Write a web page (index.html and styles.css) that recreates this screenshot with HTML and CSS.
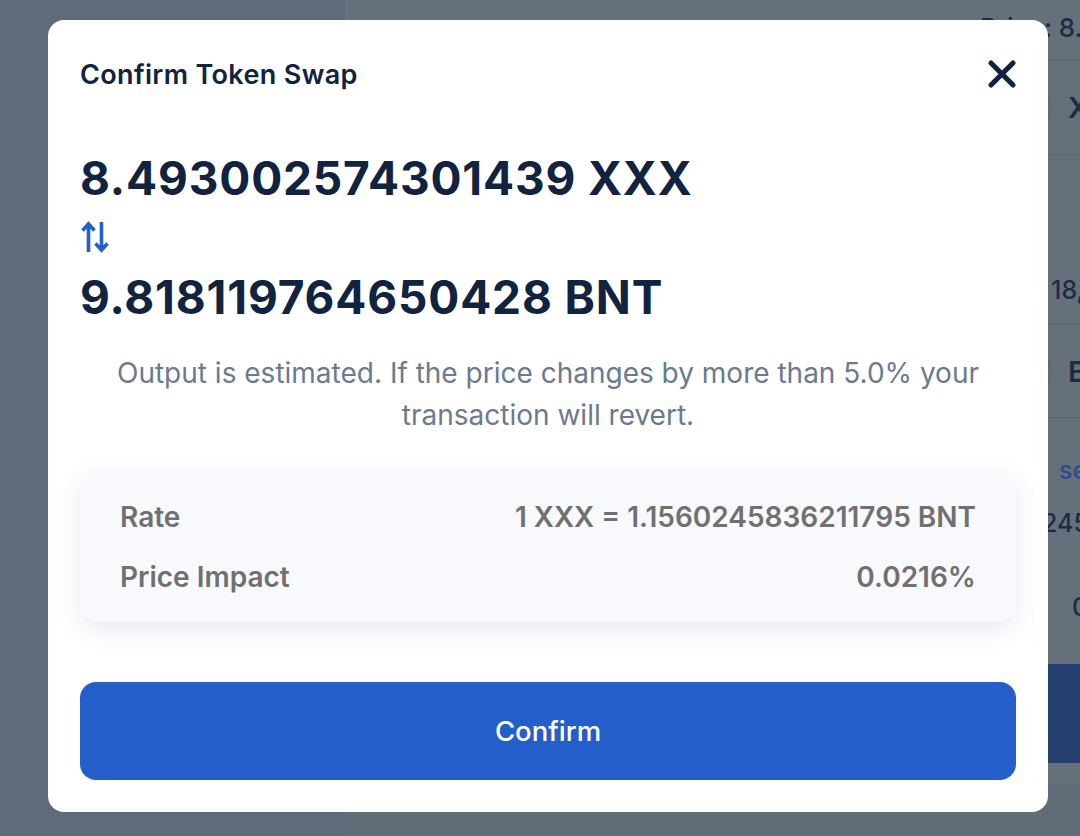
FILE: index.html
```html
<!DOCTYPE html>
<html>
<head>
<meta charset="utf-8">
<link rel="stylesheet" href="styles.css">
</head>
<body>
<div class="page">
  <aside class="sidebar"></aside>
  <main class="main">
    <div class="widget">
      <div class="w-row r1"><span class="w-text">Price: 8.4930</span></div>
      <div class="w-row r2"><span class="coin"></span><span class="w-token">XXX</span></div>
      <div class="w-row r3"><span class="w-text">18,000</span></div>
      <div class="w-row r4"><span class="coin"></span><span class="w-token">BNT</span></div>
      <div class="w-row r5"><span class="w-link">settings</span></div>
      <div class="w-row r6"><span class="w-text">2458</span></div>
      <div class="w-row r7"><span class="w-text">0.02</span></div>
      <div class="w-btn"></div>
    </div>
    <div class="footer"></div>
  </main>
</div>

<div class="modal">
  <div class="modal-head">
    <h2 class="title">Confirm Token Swap</h2>
    <button class="close" aria-label="Close">
      <svg width="32" height="32" viewBox="0 0 32 32"><path d="M5 5L27 27M27 5L5 27" stroke="#11233f" stroke-width="5.2" stroke-linecap="round"/></svg>
    </button>
  </div>
  <div class="amount">8.493002574301439 XXX</div>
  <div class="swap-icon">
    <svg width="30" height="32" viewBox="0 0 30 32"><path d="M8.5 31V4M2.5 9.5L8.5 3L14.5 9.5" stroke="#2460cc" stroke-width="3.6" fill="none"/><path d="M21.5 1V28M15.5 22.5L21.5 29L27.5 22.5" stroke="#2460cc" stroke-width="3.6" fill="none"/></svg>
  </div>
  <div class="amount">9.818119764650428 BNT</div>
  <p class="note">Output is estimated. If the price changes by more than 5.0% your transaction will revert.</p>
  <div class="info">
    <div class="info-row"><span>Rate</span><span>1 XXX = 1.1560245836211795 BNT</span></div>
    <div class="info-row"><span>Price Impact</span><span>0.0216%</span></div>
  </div>
  <button class="confirm">Confirm</button>
</div>
</body>
</html>
```
FILE: styles.css
```css
* { box-sizing: border-box; }
html, body { margin: 0; padding: 0; }
body {
  width: 1080px;
  height: 836px;
  overflow: hidden;
  background: #66707b;
  font-family: Inter, "Noto Sans", sans-serif;
  position: relative;
}
.page { display: flex; height: 836px; }
.sidebar { width: 345px; background: #5f6b7b; flex: none; }
.main { flex: 1; display: flex; flex-direction: column; overflow: hidden; }
.widget {
  flex: none;
  height: 783px;
  margin-left: 580px;
  width: 600px;
  display: flex;
  flex-direction: column;
}
.w-row {
  display: flex;
  align-items: center;
  border-bottom: 1px solid #5d6773;
  color: #1e2b45;
  font-size: 25px;
  font-weight: 500;
  flex: none;
}
.r1 { height: 61px; padding-left: 55px; align-items: flex-start; padding-top: 12px; }
.r1 .w-text { font-size: 26px; }
.r2 { height: 94px; padding-left: 83px; }
.r3 { height: 170px; padding-left: 126px; align-items: flex-end; padding-bottom: 19px; }
.r4 { height: 93px; padding-left: 83px; }
.r5, .r6, .r7 { border-bottom: none; }
.r5 { height: 78px; padding-left: 134px; padding-top: 26px; }
.r6 { height: 54px; padding-left: 117px; }
.r7 { height: 114px; padding-left: 147px; }
.coin { width: 44px; height: 44px; border-radius: 50%; background: #606a77; margin-right: 16px; flex: none; }
.w-token { font-size: 29px; font-weight: 600; }
.w-link { color: #2c4c8a; font-size: 25px; }
.w-btn { height: 99px; background: #243f6d; flex: none; }
.footer { flex: 1; background: #616c79; }

.modal {
  position: absolute;
  left: 48px;
  top: 20px;
  width: 1000px;
  height: 792px;
  background: #fff;
  border-radius: 16px;
  padding: 32px;
  display: flex;
  flex-direction: column;
}
.modal-head {
  display: flex;
  justify-content: space-between;
  align-items: center;
  height: 44px;
  flex: none;
}
.title {
  margin: 0;
  font-size: 27px;
  font-weight: 600;
  letter-spacing: 0.35px;
  color: #11233f;
}
.close {
  border: none;
  background: none;
  padding: 0;
  margin-right: -2px;
  display: flex;
  cursor: pointer;
}
.amount {
  font-size: 46px;
  font-weight: 700;
  letter-spacing: 0.85px;
  color: #11233f;
  line-height: 56px;
  flex: none;
}
.modal-head + .amount { margin-top: 54px; }
.swap-icon { display: flex; height: 32px; align-items: center; margin-top: 15px; margin-bottom: 16px; flex: none; }
.note {
  margin: 27px 0 0;
  text-align: center;
  font-size: 28px;
  line-height: 42px;
  color: #6b7a8f;
  padding: 0 20px;
}
.info {
  margin-top: 34px;
  background: #f8f9fc;
  border-radius: 16px;
  box-shadow: 0 8px 24px rgba(40, 60, 120, 0.10);
  padding: 30px 40px 28px;
  display: flex;
  flex-direction: column;
  gap: 26px;
  flex: none;
}
.info-row {
  display: flex;
  justify-content: space-between;
  font-size: 28px;
  font-weight: 600;
  line-height: 34px;
  color: #707070;
}
.confirm {
  margin-top: 60px;
  height: 98px;
  flex: none;
  border: none;
  border-radius: 16px;
  background: #245ecb;
  color: #fff;
  font-family: Inter, "Noto Sans", sans-serif;
  font-size: 27.5px;
  font-weight: 500;
}
```
